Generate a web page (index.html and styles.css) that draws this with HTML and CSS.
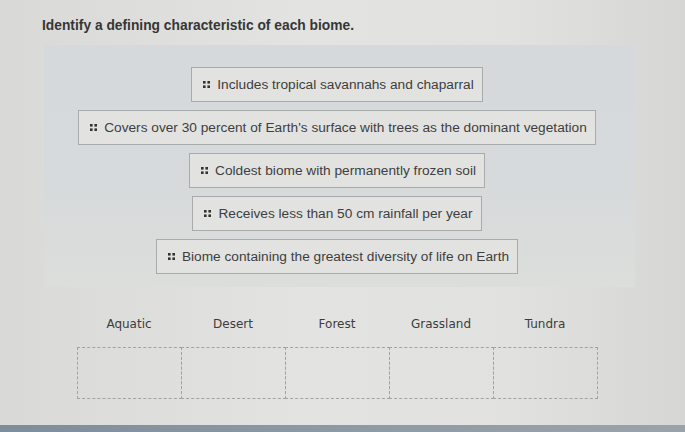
FILE: index.html
```html
<!DOCTYPE html>
<html>
<head>
<meta charset="utf-8">
<link rel="stylesheet" href="styles.css">
</head>
<body>
<div class="page">
  <h1 class="prompt">Identify a defining characteristic of each biome.</h1>
  <div class="bank">
    <div class="item"><svg class="grip" width="7" height="7" viewBox="0 0 7 7"><rect x="0" y="0" width="2.6" height="2.6"/><rect x="4.4" y="0" width="2.6" height="2.6"/><rect x="0" y="4.4" width="2.6" height="2.6"/><rect x="4.4" y="4.4" width="2.6" height="2.6"/></svg><span>Includes tropical savannahs and chaparral</span></div>
    <div class="item"><svg class="grip" width="7" height="7" viewBox="0 0 7 7"><rect x="0" y="0" width="2.6" height="2.6"/><rect x="4.4" y="0" width="2.6" height="2.6"/><rect x="0" y="4.4" width="2.6" height="2.6"/><rect x="4.4" y="4.4" width="2.6" height="2.6"/></svg><span>Covers over 30 percent of Earth's surface with trees as the dominant vegetation</span></div>
    <div class="item"><svg class="grip" width="7" height="7" viewBox="0 0 7 7"><rect x="0" y="0" width="2.6" height="2.6"/><rect x="4.4" y="0" width="2.6" height="2.6"/><rect x="0" y="4.4" width="2.6" height="2.6"/><rect x="4.4" y="4.4" width="2.6" height="2.6"/></svg><span>Coldest biome with permanently frozen soil</span></div>
    <div class="item"><svg class="grip" width="7" height="7" viewBox="0 0 7 7"><rect x="0" y="0" width="2.6" height="2.6"/><rect x="4.4" y="0" width="2.6" height="2.6"/><rect x="0" y="4.4" width="2.6" height="2.6"/><rect x="4.4" y="4.4" width="2.6" height="2.6"/></svg><span>Receives less than 50 cm rainfall per year</span></div>
    <div class="item"><svg class="grip" width="7" height="7" viewBox="0 0 7 7"><rect x="0" y="0" width="2.6" height="2.6"/><rect x="4.4" y="0" width="2.6" height="2.6"/><rect x="0" y="4.4" width="2.6" height="2.6"/><rect x="4.4" y="4.4" width="2.6" height="2.6"/></svg><span>Biome containing the greatest diversity of life on Earth</span></div>
  </div>
  <div class="zones">
    <div class="zone"><div class="label">Aquatic</div><div class="drop"></div></div>
    <div class="zone"><div class="label">Desert</div><div class="drop"></div></div>
    <div class="zone"><div class="label">Forest</div><div class="drop"></div></div>
    <div class="zone"><div class="label">Grassland</div><div class="drop"></div></div>
    <div class="zone"><div class="label">Tundra</div><div class="drop"></div></div>
  </div>
</div>
<div class="bezel"></div>
</body>
</html>
```
FILE: styles.css
```css
html, body {
  margin: 0;
  padding: 0;
}
body {
  width: 685px;
  height: 432px;
  overflow: hidden;
  background: linear-gradient(90deg, #d9dad7 0%, #e3e4e1 45%, #e1e2df 75%, #d6d7d4 100%);
  font-family: "Liberation Sans", Arial, sans-serif;
  color: #3b3b3b;
  display: flex;
  flex-direction: column;
}
.page {
  flex: 1;
  display: flex;
  flex-direction: column;
}
.prompt {
  margin: 18px 0 0 42px;
  font-size: 13.8px;
  font-weight: bold;
  line-height: 16px;
  color: #363636;
}
.bank {
  margin: 11px 0 0 44px;
  width: 591px;
  height: 242px;
  box-sizing: border-box;
  background: linear-gradient(180deg, #d5d9db 0%, #d7dadb 60%, #dcdedc 100%);
  padding-top: 22px;
  display: flex;
  flex-direction: column;
  align-items: center;
  gap: 8px;
}
.item {
  height: 35px;
  box-sizing: border-box;
  border: 1px solid #a8abab;
  background: #e2e3e1;
  padding: 0 8px 0 11px;
  display: flex;
  align-items: center;
  gap: 7px;
  font-size: 13.7px;
  color: #3e3e3e;
  margin-left: -5px;
}
.grip {
  fill: #333;
  flex: none;
}
.zones {
  margin: 30px 0 0 77px;
  width: 520px;
  display: grid;
  grid-template-columns: repeat(5, 1fr);
}
.zone {
  display: flex;
  flex-direction: column;
  align-items: center;
}
.label {
  font-family: "DejaVu Sans", sans-serif;
  font-size: 12px;
  color: #3c3c3c;
  height: 14px;
  line-height: 14px;
  margin-bottom: 16px;
}
.drop {
  align-self: stretch;
  height: 50px;
  border: 1px dashed #a2a4a3;
  margin-right: -1px;
}
.bezel {
  height: 7px;
  background: linear-gradient(90deg, #7d8d9a, #8d9aa4 50%, #9aa3aa);
}
```
